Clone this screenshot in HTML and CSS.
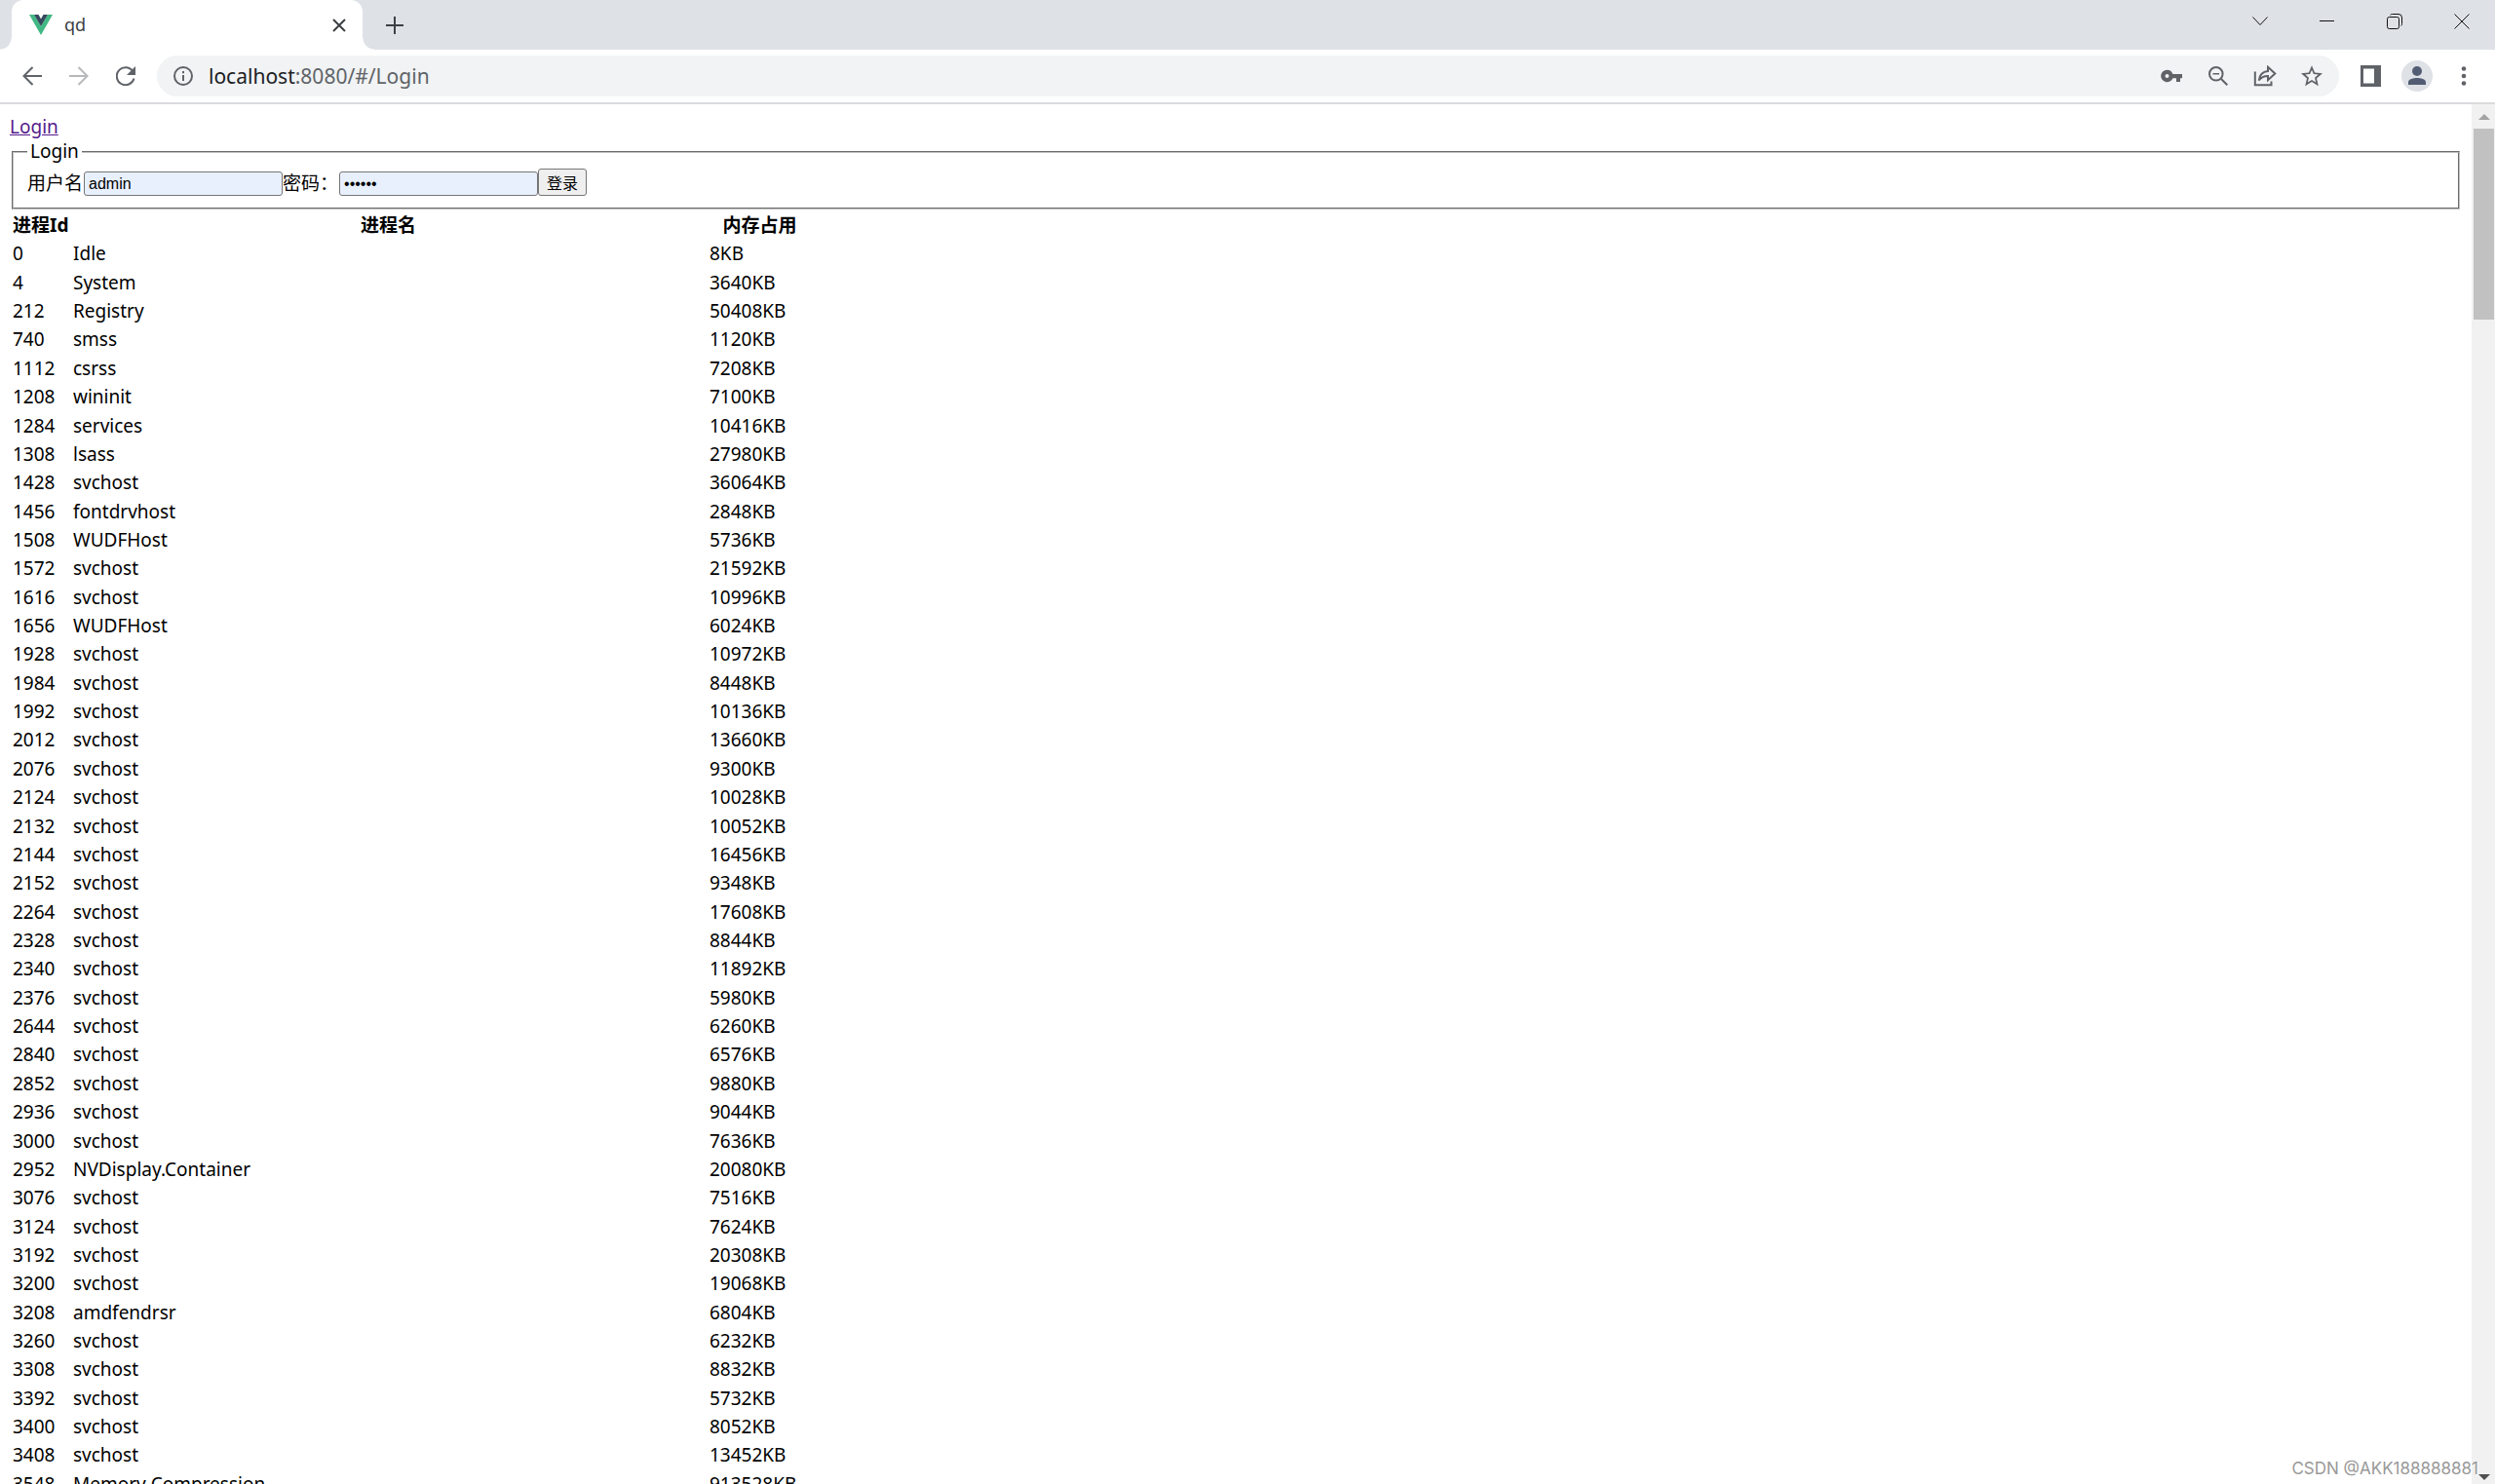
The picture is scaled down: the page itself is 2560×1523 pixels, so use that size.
FILE: index.html
```html
<!DOCTYPE html>
<html lang="zh-CN">
<head>
  <meta charset="UTF-8">
  <meta name="viewport" content="width=device-width, initial-scale=1.0">
  <title>qd</title>
  <link rel="stylesheet" href="styles.css">
</head>
<body>
  <header class="tab-strip">
    <div class="tab">
      <svg class="favicon" width="24" height="21" viewBox="0 0 24 21"><path fill="#41b883" d="M0 0h5l7 12 7-12h5L12 21z"/><path fill="#34495e" d="M5 0h4.500L12 4.500 14.500 0H19l-7 12z"/></svg>
      <span class="tab-title">qd</span>
      <button class="tab-close" aria-label="关闭标签页"><svg width="14" height="14" viewBox="0 0 14 14"><path d="M1 1l12 12M13 1L1 13"/></svg></button>
    </div>
    <button class="tab-new" aria-label="新标签页"><svg width="18" height="18" viewBox="0 0 18 18"><path d="M9 0v18M0 9h18"/></svg></button>
    <div class="window-buttons">
      <button aria-label="搜索标签页"><svg width="16" height="16" viewBox="0 0 16 16"><path d="M.5 3.500l7.500 8 7.500-8"/></svg></button>
      <button aria-label="最小化"><svg width="16" height="16" viewBox="0 0 16 16"><path d="M0 7.500h15"/></svg></button>
      <button aria-label="还原"><svg width="16" height="16" viewBox="0 0 16 16"><rect x=".5" y="3.500" width="12" height="12" rx="2"/><path d="M3.500 1.500Q4 .5 5.500.5H12Q15.500.5 15.500 4v6.500q0 1.500-1 2"/></svg></button>
      <button aria-label="关闭"><svg width="16" height="16" viewBox="0 0 16 16"><path d="M.5.5l15 15M15.500.5l-15 15"/></svg></button>
    </div>
  </header>

  <div class="toolbar">
    <button aria-label="后退"><svg width="20" height="20" viewBox="0 0 20 20"><path class="line" d="M20 10H2M10.500 1L1.500 10l9 9"/></svg></button>
    <button class="off" aria-label="前进"><svg width="20" height="20" viewBox="0 0 20 20"><path class="line" d="M0 10h18M9.500 1l9 9-9 9"/></svg></button>
    <button aria-label="刷新"><svg width="20" height="20" viewBox="0 0 20 20"><path class="line" d="M17.500 5.500A9 9 0 1 0 18.500 12.500"/><path d="M20 0v9h-9z"/></svg></button>
    <div class="address">
      <svg width="20" height="20" viewBox="0 0 20 20"><circle class="line" cx="10" cy="10" r="9"/><path d="M9 9h2v6H9zM9 5h2v2.200H9z"/></svg>
      <span class="url"><b>localhost</b>:8080/#/Login</span>
      <button aria-label="管理密码"><svg width="22" height="14" viewBox="0 0 22 14"><path fill-rule="evenodd" d="M6.500.7a6.300 6.300 0 1 0 5.900 8.500H16V13h4V9.200h2V5H12.400A6.300 6.300 0 0 0 6.500.7zm0 4.300a2 2 0 1 1 0 4 2 2 0 0 1 0-4z"/></svg></button>
      <button aria-label="缩放"><svg width="20" height="20" viewBox="0 0 20 20"><circle class="line" cx="7.800" cy="7.800" r="6.800"/><path class="line" d="M12.800 12.800l6.500 6.500"/><path d="M4.500 7h6.600v1.500H4.500z"/></svg></button>
      <button aria-label="分享"><svg width="24" height="22" viewBox="0 0 24 22"><path class="line" d="M1.800 6.500V20.200H18.500V16.500"/><path class="line" d="M15 1.800l7.300 6.700L15 15.200v-4.200c-4 0-6.700 1-9.200 4.500C6.500 9.500 10 6.500 15 6z"/></svg></button>
      <button aria-label="收藏"><svg width="24" height="24" viewBox="0 0 24 24"><path d="M23 9.240l-7.910-.68L12 1.300 8.910 8.570 1 9.240l6 5.200L5.200 22.200 12 18.080l6.800 4.120-1.790-7.760zM12 15.900l-4.140 2.500 1.100-4.710-3.650-3.160 4.820-.42L12 5.700l1.880 4.420 4.820.42-3.650 3.160 1.100 4.710z"/></svg></button>
    </div>
    <button aria-label="侧边栏"><svg width="21" height="22" viewBox="0 0 21 22"><path fill-rule="evenodd" d="M0 0h21v22H0zM3 3.500v15h11v-15z"/></svg></button>
    <button class="avatar" aria-label="个人资料"><svg width="20" height="20" viewBox="0 0 20 20"><circle cx="10" cy="5" r="5"/><path d="M1 19v-2.500C1 13 6.500 12 10 12s9 1 9 4.500V19z"/></svg></button>
    <button aria-label="菜单"><svg width="6" height="20" viewBox="0 0 6 20"><circle cx="3" cy="2.500" r="2.300"/><circle cx="3" cy="10" r="2.300"/><circle cx="3" cy="17.500" r="2.300"/></svg></button>
  </div>

  <div class="viewport">
    <main class="page">
      <nav class="nav"><a href="#/Login">Login</a></nav>
      <fieldset class="login">
        <legend>Login</legend>
        <div class="login-row">
          <label for="username">用户名</label>
          <input type="text" id="username" value="admin">
          <label for="password">密码：</label>
          <input type="password" id="password" value="123456">
          <button type="button">登录</button>
        </div>
      </fieldset>
      <table class="process-table">
        <colgroup><col class="col-id"><col class="col-name"><col class="col-memory"></colgroup>
        <thead>
          <tr><th>进程Id</th><th>进程名</th><th>内存占用</th></tr>
        </thead>
        <tbody>
          <tr><td>0</td><td>Idle</td><td>8KB</td></tr>
          <tr><td>4</td><td>System</td><td>3640KB</td></tr>
          <tr><td>212</td><td>Registry</td><td>50408KB</td></tr>
          <tr><td>740</td><td>smss</td><td>1120KB</td></tr>
          <tr><td>1112</td><td>csrss</td><td>7208KB</td></tr>
          <tr><td>1208</td><td>wininit</td><td>7100KB</td></tr>
          <tr><td>1284</td><td>services</td><td>10416KB</td></tr>
          <tr><td>1308</td><td>lsass</td><td>27980KB</td></tr>
          <tr><td>1428</td><td>svchost</td><td>36064KB</td></tr>
          <tr><td>1456</td><td>fontdrvhost</td><td>2848KB</td></tr>
          <tr><td>1508</td><td>WUDFHost</td><td>5736KB</td></tr>
          <tr><td>1572</td><td>svchost</td><td>21592KB</td></tr>
          <tr><td>1616</td><td>svchost</td><td>10996KB</td></tr>
          <tr><td>1656</td><td>WUDFHost</td><td>6024KB</td></tr>
          <tr><td>1928</td><td>svchost</td><td>10972KB</td></tr>
          <tr><td>1984</td><td>svchost</td><td>8448KB</td></tr>
          <tr><td>1992</td><td>svchost</td><td>10136KB</td></tr>
          <tr><td>2012</td><td>svchost</td><td>13660KB</td></tr>
          <tr><td>2076</td><td>svchost</td><td>9300KB</td></tr>
          <tr><td>2124</td><td>svchost</td><td>10028KB</td></tr>
          <tr><td>2132</td><td>svchost</td><td>10052KB</td></tr>
          <tr><td>2144</td><td>svchost</td><td>16456KB</td></tr>
          <tr><td>2152</td><td>svchost</td><td>9348KB</td></tr>
          <tr><td>2264</td><td>svchost</td><td>17608KB</td></tr>
          <tr><td>2328</td><td>svchost</td><td>8844KB</td></tr>
          <tr><td>2340</td><td>svchost</td><td>11892KB</td></tr>
          <tr><td>2376</td><td>svchost</td><td>5980KB</td></tr>
          <tr><td>2644</td><td>svchost</td><td>6260KB</td></tr>
          <tr><td>2840</td><td>svchost</td><td>6576KB</td></tr>
          <tr><td>2852</td><td>svchost</td><td>9880KB</td></tr>
          <tr><td>2936</td><td>svchost</td><td>9044KB</td></tr>
          <tr><td>3000</td><td>svchost</td><td>7636KB</td></tr>
          <tr><td>2952</td><td>NVDisplay.Container</td><td>20080KB</td></tr>
          <tr><td>3076</td><td>svchost</td><td>7516KB</td></tr>
          <tr><td>3124</td><td>svchost</td><td>7624KB</td></tr>
          <tr><td>3192</td><td>svchost</td><td>20308KB</td></tr>
          <tr><td>3200</td><td>svchost</td><td>19068KB</td></tr>
          <tr><td>3208</td><td>amdfendrsr</td><td>6804KB</td></tr>
          <tr><td>3260</td><td>svchost</td><td>6232KB</td></tr>
          <tr><td>3308</td><td>svchost</td><td>8832KB</td></tr>
          <tr><td>3392</td><td>svchost</td><td>5732KB</td></tr>
          <tr><td>3400</td><td>svchost</td><td>8052KB</td></tr>
          <tr><td>3408</td><td>svchost</td><td>13452KB</td></tr>
          <tr><td>3548</td><td>Memory Compression</td><td>913528KB</td></tr>
        </tbody>
      </table>
    </main>
    <div class="scrollbar">
      <svg class="arrow-up" width="12" height="6" viewBox="0 0 12 6"><path d="M6 0l6 6H0z"/></svg>
      <div class="scroll-thumb"></div>
      <svg class="arrow-down" width="12" height="6" viewBox="0 0 12 6"><path d="M0 0h12L6 6z"/></svg>
    </div>
  </div>
  <div class="watermark">CSDN @AKK188888881</div>
</body>
</html>
```
FILE: styles.css
```css
* {
  box-sizing: border-box;
}

body {
  margin: 0;
  height: 100vh;
  display: flex;
  flex-direction: column;
  overflow: hidden;
  background: #fff;
  color: #000;
  font-family: "Noto Sans", "Noto Sans CJK SC", sans-serif;
  font-size: 19px;
  line-height: 25px;
}

svg {
  display: block;
}

/* browser tabs */
.tab-strip {
  display: flex;
  align-items: center;
  height: 51px;
  padding-left: 12px;
  background: #dee1e6;
}

.tab-strip button,
.toolbar button {
  display: flex;
  align-items: center;
  justify-content: center;
  padding: 0;
  border: none;
  background: none;
}

.tab-strip button svg {
  fill: none;
  stroke: #3c4043;
  stroke-width: 2;
}

.tab {
  position: relative;
  display: flex;
  align-items: center;
  gap: 12px;
  width: 360px;
  height: 51px;
  padding: 0 17px 0 18px;
  background: #fff;
  border-radius: 12px 12px 0 0;
}

.tab::before,
.tab::after {
  content: "";
  position: absolute;
  bottom: 0;
  width: 12px;
  height: 12px;
}

.tab::before {
  right: 100%;
  background: radial-gradient(circle at 0 0, #dee1e6 11px, #fff 12px);
}

.tab::after {
  left: 100%;
  background: radial-gradient(circle at 100% 0, #dee1e6 11px, #fff 12px);
}

.tab-title {
  flex: 1;
  font-size: 18px;
  color: #3c4043;
}

.tab-new {
  width: 32px;
  height: 32px;
  margin-left: 17px;
}

.window-buttons {
  display: flex;
  margin-left: auto;
  margin-bottom: 8px;
}

.window-buttons button {
  width: 69px;
  height: 43px;
}

.tab-strip .window-buttons svg {
  stroke: #111;
  stroke-width: 1;
}

/* toolbar */
.toolbar {
  display: flex;
  align-items: center;
  gap: 16px;
  height: 56px;
  padding: 0 16px 0 17px;
  border-bottom: 2px solid #dadbdd;
}

.toolbar button {
  width: 32px;
  height: 32px;
}

.toolbar svg {
  fill: #5f6368;
}

.toolbar .line {
  fill: none;
  stroke: #5f6368;
  stroke-width: 2;
}

.toolbar .off {
  opacity: 0.45;
}

.address {
  flex: 1;
  display: flex;
  align-items: center;
  gap: 16px;
  height: 42px;
  padding: 0 12px 0 17px;
  border-radius: 21px;
  background: #f1f3f4;
}

.url {
  flex: 1;
  font-size: 21px;
  color: #5f6368;
}

.url b {
  font-weight: normal;
  color: #202124;
}

.toolbar .avatar {
  border-radius: 50%;
  background: #dee1e6;
}

.toolbar .avatar svg {
  fill: #525d73;
}

/* page */
.viewport {
  flex: 1;
  display: flex;
  min-height: 0;
}

.page {
  flex: 1;
  overflow: hidden;
  padding: 11px 12px 0 9px;
}

.nav {
  padding-left: 1px;
}

.nav a {
  color: #551a8b;
}

.login {
  margin: 0 0 1px 3px;
  padding: 5px 14px 12px;
  border: 2px groove #c0c0c0;
}

.login legend {
  padding: 0 3px;
}

.login-row {
  display: flex;
  align-items: flex-end;
}

.login label {
  margin-right: 1px;
}

.login input {
  width: 204px;
  height: 25px;
  padding: 0 4px;
  border: 1px solid #767676;
  border-radius: 3px;
  background: #e8f0fe;
  font-family: "Liberation Sans", sans-serif;
  font-size: 16px;
}

.login button {
  height: 28px;
  padding: 0 8px;
  border: 1px solid #767676;
  border-radius: 3px;
  background: #efefef;
  font-family: "Liberation Sans", "Noto Sans CJK SC", sans-serif;
  font-size: 16px;
}

.process-table {
  table-layout: fixed;
  width: 826px;
  border-spacing: 2px;
  line-height: 1.44;
}

.process-table th,
.process-table td {
  padding: 0 2px;
  text-align: left;
  white-space: nowrap;
}

.process-table th {
  text-align: center;
}

.col-id {
  width: 60px;
}

.col-name {
  width: 651px;
}

.col-memory {
  width: 107px;
}

.scrollbar {
  display: flex;
  flex-direction: column;
  width: 24px;
  padding: 10px 1px 4px 2px;
  background: #f1f1f1;
}

.arrow-up,
.arrow-down {
  align-self: center;
}

.arrow-up {
  fill: #a3a3a3;
}

.arrow-down {
  margin-top: auto;
  fill: #505050;
}

.scroll-thumb {
  height: 196px;
  margin-top: 9px;
  background: #c1c1c1;
}

.watermark {
  position: absolute;
  right: 17px;
  bottom: 3px;
  color: #999;
  font-family: Inter, sans-serif;
  font-size: 17px;
  text-shadow: 1px 1px 0 #fff;
}
```
